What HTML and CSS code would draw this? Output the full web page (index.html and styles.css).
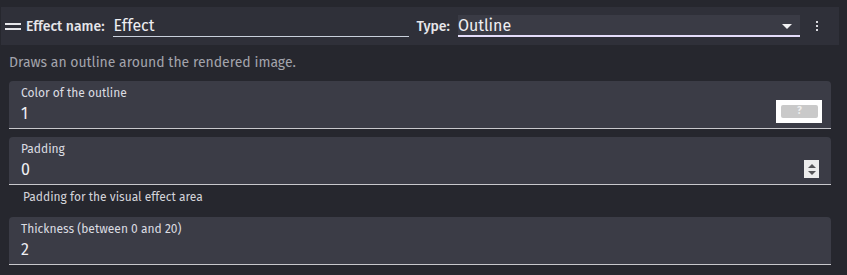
FILE: index.html
```html
<!DOCTYPE html>
<html>
<head>
<meta charset="utf-8">
<link rel="stylesheet" href="styles.css">
</head>
<body>
<div class="page">
  <div class="header">
    <span class="drag"><span></span><span></span></span>
    <span class="hlabel">Effect name:</span>
    <div class="name-input">Effect</div>
    <span class="hlabel type-label">Type:</span>
    <div class="select">
      <span>Outline</span>
      <span class="caret"></span>
    </div>
    <span class="kebab"><i></i><i></i><i></i></span>
  </div>
  <div class="desc">Draws an outline around the rendered image.</div>
  <div class="fields">
    <div class="field">
      <div class="flabel">Color of the outline</div>
      <div class="frow">
        <div class="fvalue">1</div>
        <div class="swatch"><div class="swatch-inner">?</div></div>
      </div>
    </div>
    <div class="field">
      <div class="flabel">Padding</div>
      <div class="frow">
        <div class="fvalue">0</div>
        <div class="spinner"><span class="up"></span><span class="down"></span></div>
      </div>
    </div>
    <div class="helper">Padding for the visual effect area</div>
    <div class="field field-last">
      <div class="flabel">Thickness (between 0 and 20)</div>
      <div class="frow">
        <div class="fvalue">2</div>
      </div>
    </div>
  </div>
</div>
</body>
</html>
```
FILE: styles.css
```css
html, body {
  margin: 0;
  padding: 0;
  background: #26272e;
}
body {
  font-family: "Fira Sans", Lato, "Noto Sans", sans-serif;
  color: #e8e8ec;
  width: 847px;
  height: 275px;
  overflow: hidden;
}
.page {
  padding-top: 7px;
  width: 839px;
}
.header {
  margin-left: 1px;
  height: 38px;
  background: #2f3039;
  display: flex;
  align-items: center;
  box-sizing: border-box;
  padding-left: 4px;
}
.drag {
  display: flex;
  flex-direction: column;
  gap: 3px;
  width: 16px;
  margin-right: 5px;
}
.drag span {
  display: block;
  height: 2px;
  background: #e6e6ea;
}
.hlabel {
  font-size: 14px;
  font-weight: 500;
  color: #e6e6ea;
  margin-right: 8px;
}
.name-input {
  width: 296px;
  height: 22px;
  box-sizing: border-box;
  border-bottom: 1px solid #c9d0dc;
  font-size: 16px;
  line-height: 18px;
  padding-top: 2px;
  color: #eeeef2;
  padding-left: 1px;
}
.type-label {
  margin-left: 8px;
}
.select {
  width: 342px;
  height: 22px;
  box-sizing: border-box;
  background: #3a3b45;
  border-bottom: 2px solid #e4dcfa;
  display: flex;
  align-items: center;
  justify-content: space-between;
  font-size: 16px;
  line-height: 18px;
  color: #eeeef2;
  padding: 1px 8px 0 0;
}
.caret {
  width: 0;
  height: 0;
  border-left: 5px solid transparent;
  border-right: 5px solid transparent;
  border-top: 5px solid #f2f2f4;
  margin-top: 1px;
}
.kebab {
  display: flex;
  flex-direction: column;
  gap: 2px;
  margin-left: 16px;
}
.kebab i {
  display: block;
  width: 2px;
  height: 2px;
  background: #d8d8de;
}
.desc {
  font-size: 14px;
  color: #a3a4ac;
  padding: 10px 0 0 9px;
  height: 26px;
  box-sizing: border-box;
  line-height: 16px;
}
.fields {
  padding: 10px 0 0 9px;
  width: 831px;
  box-sizing: border-box;
}
.field {
  width: 822px;
  height: 48px;
  box-sizing: border-box;
  background: #3b3c46;
  border-radius: 4px 4px 0 0;
  border-bottom: 1px solid #c8c8cc;
  padding: 5px 12px 0 12px;
  margin-bottom: 8px;
}
.flabel {
  font-size: 12px;
  line-height: 15px;
  color: #dcdce2;
}
.frow {
  display: flex;
  align-items: flex-start;
  justify-content: space-between;
}
.fvalue {
  font-size: 16px;
  line-height: 20px;
  padding-top: 3px;
  color: #f0f0f4;
}
.swatch {
  width: 46px;
  height: 23px;
  box-sizing: border-box;
  background: #ffffff;
  padding: 5px 4px 5px 5px;
  margin-right: -3px;
  margin-top: -1px;
}
.swatch-inner {
  height: 13px;
  background: #c9c9c9;
  border-radius: 2px;
  color: #eeeeee;
  font-size: 10px;
  font-weight: bold;
  text-align: center;
  line-height: 13px;
}
.spinner {
  width: 15px;
  height: 18px;
  background: #ececec;
  display: flex;
  flex-direction: column;
  align-items: center;
  justify-content: center;
  gap: 3px;
  margin-top: 3px;
}
.spinner .up, .spinner .down {
  width: 0;
  height: 0;
  border-left: 4px solid transparent;
  border-right: 4px solid transparent;
}
.spinner .up {
  border-bottom: 4px solid #555558;
}
.spinner .down {
  border-top: 4px solid #555558;
}
.helper {
  font-size: 12px;
  color: #d4d4da;
  padding-left: 14px;
  margin-top: -3px;
  height: 27px;
  line-height: 15px;
}
```
